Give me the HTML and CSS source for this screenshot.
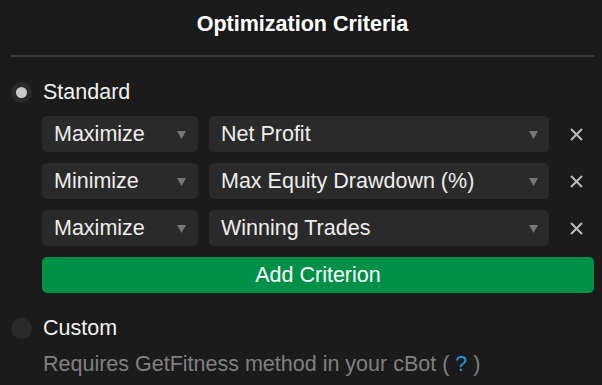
FILE: index.html
```html
<!DOCTYPE html>
<html>
    <head>
        <meta charset="UTF-8">
        <meta name="viewport" content="width=device-width, initial-scale=1.0">
        <title>Optimization Criteria</title>
        <link rel="stylesheet" href="styles.css">
    </head>
    <body>
        <div class="panel">
            <h1 class="title">Optimization Criteria</h1>
            <div class="divider"></div>

            <label class="option">
                <span class="radio checked"></span>
                <span class="option-label">Standard</span>
            </label>

            <div class="criteria">
                <div class="criterion">
                    <div class="select goal">
                        <span>Maximize</span>
                        <svg class="arrow" width="9" height="8" viewBox="0 0 9 8"><polygon points="0,0 9,0 4.5,8" /></svg>
                    </div>
                    <div class="select metric">
                        <span>Net Profit</span>
                        <svg class="arrow" width="9" height="8" viewBox="0 0 9 8"><polygon points="0,0 9,0 4.5,8" /></svg>
                    </div>
                    <button class="remove" title="Remove">
                        <svg width="13" height="13" viewBox="0 0 13 13"><path d="M1 1 L12 12 M12 1 L1 12" /></svg>
                    </button>
                </div>
                <div class="criterion">
                    <div class="select goal">
                        <span>Minimize</span>
                        <svg class="arrow" width="9" height="8" viewBox="0 0 9 8"><polygon points="0,0 9,0 4.5,8" /></svg>
                    </div>
                    <div class="select metric">
                        <span>Max Equity Drawdown (%)</span>
                        <svg class="arrow" width="9" height="8" viewBox="0 0 9 8"><polygon points="0,0 9,0 4.5,8" /></svg>
                    </div>
                    <button class="remove" title="Remove">
                        <svg width="13" height="13" viewBox="0 0 13 13"><path d="M1 1 L12 12 M12 1 L1 12" /></svg>
                    </button>
                </div>
                <div class="criterion">
                    <div class="select goal">
                        <span>Maximize</span>
                        <svg class="arrow" width="9" height="8" viewBox="0 0 9 8"><polygon points="0,0 9,0 4.5,8" /></svg>
                    </div>
                    <div class="select metric">
                        <span>Winning Trades</span>
                        <svg class="arrow" width="9" height="8" viewBox="0 0 9 8"><polygon points="0,0 9,0 4.5,8" /></svg>
                    </div>
                    <button class="remove" title="Remove">
                        <svg width="13" height="13" viewBox="0 0 13 13"><path d="M1 1 L12 12 M12 1 L1 12" /></svg>
                    </button>
                </div>
                <button class="add-btn">Add Criterion</button>
            </div>

            <label class="option custom">
                <span class="radio"></span>
                <span class="option-label">Custom</span>
            </label>
            <p class="hint">Requires GetFitness method in your cBot ( <span class="help">?</span> )</p>
        </div>
    </body>
</html>
```

FILE: styles.css
```css
body {
    margin: 0;
    padding: 0;
    background: #1b1b1b;
    font-family: "Liberation Sans", Arial, sans-serif;
    color: #f2f2f2;
}

.panel {
    width: 602px;
    height: 385px;
    box-sizing: border-box;
    padding: 12px 6px 0 11px;
    border-left: 2px solid #222222;
    margin-left: -2px;
}

.title {
    margin: 0;
    font-size: 21.5px;
    line-height: 24px;
    font-weight: bold;
    text-align: center;
    color: #ffffff;
    text-shadow: 0 0 2px rgba(0, 0, 0, 0.9), 0 0 1px rgba(255, 255, 255, 0.4);
}


.divider {
    height: 2px;
    background: #3a3a3a;
    margin-top: 19px;
}


.option {
    display: flex;
    align-items: center;
    height: 24px;
    margin-top: 23px;
    font-size: 21.5px;
    line-height: 24px;
}

.option.custom {
    margin-top: 23px;
}

.radio {
    width: 21px;
    height: 21px;
    border-radius: 50%;
    background: #2a2a2a;
    display: flex;
    align-items: center;
    justify-content: center;
    margin-right: 11px;
}

.radio.checked::after {
    content: "";
    width: 11px;
    height: 11px;
    border-radius: 50%;
    background: #c9c9c9;
}


.criteria {
    display: flex;
    flex-direction: column;
    gap: 11px;
    margin: 12px 0 0 31px;
}

.criterion {
    display: flex;
    align-items: center;
    height: 36px;
}

.select {
    height: 36px;
    box-sizing: border-box;
    background: #2a2a2a;
    border-radius: 5px;
    display: flex;
    align-items: center;
    justify-content: space-between;
    padding: 0 12px 0 12px;
    font-size: 21.5px;
    color: #eeeeee;
}

.select.goal {
    width: 156px;
}

.select.metric {
    width: 340px;
    margin-left: 11px;
    padding-right: 11px;
}

.arrow {
    fill: #777777;
    margin-top: 1px;
}

.remove {
    background: none;
    border: none;
    padding: 0;
    margin-left: 21px;
    width: 13px;
    height: 13px;
    display: flex;
    cursor: pointer;
}

.remove svg {
    stroke: #bdbdbd;
    stroke-width: 2;
    fill: none;
}

.add-btn {
    height: 36px;
    border: none;
    border-radius: 5px;
    background: #009148;
    color: #ffffff;
    font-family: "Liberation Sans", Arial, sans-serif;
    font-size: 21.5px;
    cursor: pointer;
}


.hint {
    margin: 12px 0 0 32px;
    font-size: 21.5px;
    line-height: 24px;
    color: #808080;
}

.help {
    color: #1a9be0;
}
```
